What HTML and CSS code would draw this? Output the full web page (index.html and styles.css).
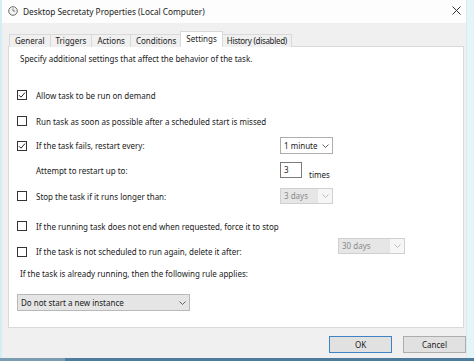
FILE: index.html
```html
<!DOCTYPE html>
<html>
<head>
<meta charset="utf-8">
<link rel="stylesheet" href="styles.css">
</head>
<body>
<div class="screen">
  <div class="desk">
    <div class="window">
      <div class="titlebar">
        <svg class="app-icon" width="10" height="10" viewBox="0 0 10 10"><circle cx="5" cy="5" r="4.3" fill="#f4f4f4" stroke="#6b6b6b" stroke-width="1"/><path d="M5 2.4V5H7.2" fill="none" stroke="#6b6b6b" stroke-width="0.9"/></svg>
        <span class="title">Desktop Secretaty Properties (Local Computer)</span>
        <svg class="close" width="9" height="9" viewBox="0 0 9 9"><path d="M0.5 0.5L8.5 8.5M8.5 0.5L0.5 8.5" stroke="#333" stroke-width="1"/></svg>
      </div>
      <div class="body">
        <div class="tabs">
          <div class="tab">General</div>
          <div class="tab">Triggers</div>
          <div class="tab">Actions</div>
          <div class="tab">Conditions</div>
          <div class="tab active">Settings</div>
          <div class="tab tab-history">History (disabled)</div>
        </div>
        <div class="panel">
          <div class="row row-specify"><span class="intro">Specify additional settings that affect the behavior of the task.</span></div>

          <div class="row row-allow">
            <span class="cb"><svg width="10" height="10" viewBox="0 0 10 10"><path d="M2 5.2L4 7.2L8 2.6" fill="none" stroke="#222" stroke-width="1"/></svg></span>
            <span class="label">Allow task to be run on demand</span>
          </div>

          <div class="row row-run">
            <span class="cb"></span>
            <span class="label">Run task as soon as possible after a scheduled start is missed</span>
          </div>

          <div class="row row-fails">
            <span class="cb"><svg width="10" height="10" viewBox="0 0 10 10"><path d="M2 5.2L4 7.2L8 2.6" fill="none" stroke="#222" stroke-width="1"/></svg></span>
            <span class="label label-fixed">If the task fails, restart every:</span>
            <div class="dd dd-minute"><span class="dd-text">1 minute</span><span class="dd-arrow"><svg width="7" height="4" viewBox="0 0 7 4"><path d="M0.5 0.5L3.5 3.5L6.5 0.5" fill="none" stroke="#555" stroke-width="0.9"/></svg></span></div>
          </div>

          <div class="row row-attempt">
            <span class="cb-slot"></span>
            <span class="label label-fixed">Attempt to restart up to:</span>
            <div class="textbox">3</div>
            <span class="times">times</span>
          </div>

          <div class="row row-stop">
            <span class="cb"></span>
            <span class="label label-fixed">Stop the task if it runs longer than:</span>
            <div class="dd dd-disabled dd-days"><span class="dd-text">3 days</span><span class="dd-arrow"><svg width="7" height="4" viewBox="0 0 7 4"><path d="M0.5 0.5L3.5 3.5L6.5 0.5" fill="none" stroke="#b5b5b5" stroke-width="0.9"/></svg></span></div>
          </div>

          <div class="row row-running">
            <span class="cb"></span>
            <span class="label">If the running task does not end when requested, force it to stop</span>
          </div>

          <div class="row row-delete">
            <span class="cb"></span>
            <span class="label label-wide">If the task is not scheduled to run again, delete it after:</span>
            <div class="dd dd-disabled dd-30"><span class="dd-text">30 days</span><span class="dd-arrow"><svg width="7" height="4" viewBox="0 0 7 4"><path d="M0.5 0.5L3.5 3.5L6.5 0.5" fill="none" stroke="#b5b5b5" stroke-width="0.9"/></svg></span></div>
          </div>

          <div class="row row-rule"><span class="intro">If the task is already running, then the following rule applies:</span></div>

          <div class="row row-combo">
            <div class="dd dd-combo"><span class="dd-text">Do not start a new instance</span><span class="dd-arrow"><svg width="7" height="4" viewBox="0 0 7 4"><path d="M0.5 0.5L3.5 3.5L6.5 0.5" fill="none" stroke="#555" stroke-width="0.9"/></svg></span></div>
          </div>
        </div>
        <div class="footer">
          <button class="btn btn-default">OK</button>
          <button class="btn">Cancel</button>
        </div>
      </div>
    </div>
    <div class="edge"></div>
  </div>
  <div class="taskbar"><div class="taskbar-left"></div></div>
</div>
</body>
</html>
```

FILE: styles.css
```css
* { box-sizing: border-box; }
html, body { margin: 0; padding: 0; }
body {
  font-family: "Noto Sans", "Open Sans", sans-serif;
  font-size: 8px;
  color: #1a1a1a;
  background: #e6f5fa;
}
.screen {
  width: 474px;
  height: 361px;
  display: flex;
  flex-direction: column;
  overflow: hidden;
}
.desk {
  display: flex;
  height: 358px;
}
.window {
  width: 467px;
  height: 358px;
  display: flex;
  flex-direction: column;
  background: #f0f0f0;
  border-left: 2px solid #d3eef5;
  border-right: 1px solid #dfe9ec;
}
.edge {
  flex: 1;
  background: #e4f5fa;
}
.titlebar {
  height: 23px;
  background: #fdfdfd;
  display: flex;
  align-items: center;
  padding-left: 6px;
  padding-right: 5px;
}
.app-icon { margin-right: 5px; margin-top: -1px; }
.title { flex: 1; font-size: 8.3px; color: #1c1c1c; }
.close { margin-top: -2px; }

.body {
  flex: 1;
  display: flex;
  flex-direction: column;
  padding: 9px 0 0 6px;
}
.tabs {
  display: flex;
  align-items: flex-end;
  height: 15px;
  padding-left: 1px;
  position: relative;
  z-index: 1;
  margin-bottom: -1px;
}
.tab {
  height: 13px;
  line-height: 12px;
  padding: 0 5px 0 5px;
  border: 1px solid #d9d9d9;
  border-bottom: none;
  border-right: none;
  background: #f0f0f0;
  color: #1c1c1c;
}
.tab.active {
  height: 16px;
  line-height: 14px;
  background: #fff;
  border-right: 1px solid #d9d9d9;
  padding: 0 5px 0 5px;
  margin-left: -1px;
}
.tab.active + .tab { border-left: none; }
.tab:last-child { border-right: 1px solid #d9d9d9; }
.tab-history { letter-spacing: -0.3px; padding: 0 4px 0 4px; }

.panel {
  height: 282px;
  width: 456px;
  background: #fff;
  border: 1px solid #d9d9d9;
  padding-left: 8px;
}
.row {
  display: flex;
  align-items: center;
  height: 16px;
}
.row-specify { margin-top: 3px; }
.row-allow { margin-top: 21px; }
.row-run { margin-top: 10px; }
.row-fails { margin-top: 8px; height: 17px; }
.row-attempt { margin-top: 8px; }
.row-stop { margin-top: 10px; }
.row-running { margin-top: 14px; }
.row-delete { margin-top: 4px; height: 22px; align-items: flex-start; }
.row-delete .label { align-self: flex-end; height: 16px; line-height: 16px; }
.row-delete .cb { align-self: flex-end; margin-bottom: 3px; }
.row-rule { margin-top: 5px; }
.row-combo { margin-top: 13px; height: 17px; }

.intro { padding-left: 3px; }
.cb, .cb-slot {
  width: 10px;
  height: 10px;
  flex: none;
  margin-right: 9px;
}
.cb {
  border: 1px solid #333;
  background: #fff;
  display: flex;
}
.cb svg { margin: -1px; }
.label { white-space: nowrap; }
.label-fixed { width: 244px; flex: none; }
.label-wide { width: 302px; flex: none; }

.dd {
  display: flex;
  height: 17px;
  border: 1px solid #adadad;
  background: #fff;
}
.dd-text {
  flex: 1;
  line-height: 15px;
  padding-left: 3px;
  white-space: nowrap;
}
.dd-arrow {
  width: 14px;
  display: flex;
  align-items: center;
  justify-content: center;
}
.dd-minute { width: 53px; }
.dd-days { width: 53px; height: 16px; }
.dd-30 { width: 67px; height: 16px; }
.dd-disabled { border-color: #d0d0d0; background: #f6f6f6; }
.dd-disabled .dd-text { background: #e6e6e6; color: #8a8a8a; line-height: 14px; }
.dd-combo { width: 173px; background: #e5e5e5; border-color: #b9b9b9; }

.textbox {
  width: 22px;
  height: 16px;
  border: 1px solid #7a7a7a;
  background: #fff;
  padding-left: 3px;
  line-height: 13px;
}
.times {
  align-self: flex-end;
  margin-left: 7px;
  line-height: 12px;
  margin-bottom: -3px;
}

.footer {
  display: flex;
  justify-content: flex-end;
  gap: 11px;
  padding-top: 8px;
  padding-right: 0px;
}
.btn {
  width: 63px;
  height: 17px;
  font-family: inherit;
  font-size: 8px;
  color: #1a1a1a;
  background: #e1e1e1;
  border: 1px solid #adadad;
  padding: 0;
  margin: 0;
}
.btn-default { border-color: #3d84c6; }

.taskbar {
  height: 3px;
  background: #4d7c9c;
  display: flex;
}
.taskbar-left { width: 65px; background: #7b9db3; }
```
